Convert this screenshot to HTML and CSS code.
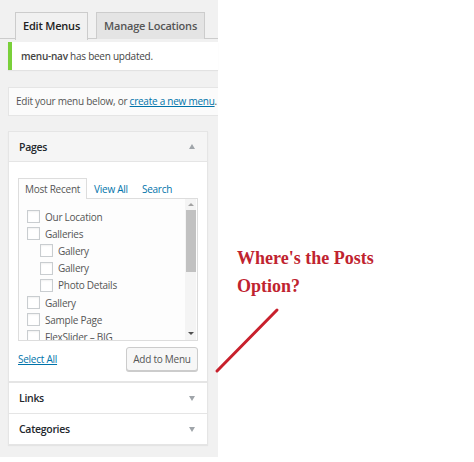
FILE: index.html
```html
<!DOCTYPE html>
<html lang="en">

<head>
    <meta charset="UTF-8">
    <meta name="viewport" content="width=device-width, initial-scale=1.0">
    <title>Menus</title>
    <link rel="stylesheet" href="styles.css">
</head>

<body>

    <div class="admin">

        <nav class="nav-tabs">
            <a class="nav-tab active">Edit Menus</a>
            <a class="nav-tab">Manage Locations</a>
        </nav>

        <div class="notice"><b>menu-nav</b> has been updated.</div>

        <div class="manage-menus">Edit your menu below, or <a href="#">create a new menu</a>.</div>

        <div class="accordion">
            <div class="section open">
                <h3 class="section-title">Pages <span class="arrow up"></span></h3>
                <div class="section-body">
                    <ul class="tabs">
                        <li class="tab active">Most Recent</li>
                        <li class="tab">View All</li>
                        <li class="tab">Search</li>
                    </ul>
                    <div class="tabs-panel">
                        <ul class="checklist">
                            <li><span class="box"></span>Our Location</li>
                            <li><span class="box"></span>Galleries</li>
                            <li class="child"><span class="box"></span>Gallery</li>
                            <li class="child"><span class="box"></span>Gallery</li>
                            <li class="child"><span class="box"></span>Photo Details</li>
                            <li><span class="box"></span>Gallery</li>
                            <li><span class="box"></span>Sample Page</li>
                            <li><span class="box"></span>FlexSlider – BIG</li>
                        </ul>
                        <div class="scrollbar">
                            <span class="scroll-up"></span>
                            <span class="thumb"></span>
                            <span class="scroll-down"></span>
                        </div>
                    </div>
                    <div class="button-controls">
                        <a href="#" class="select-all">Select All</a>
                        <button class="button">Add to Menu</button>
                    </div>
                </div>
            </div>
            <div class="section">
                <h3 class="section-title">Links <span class="arrow down"></span></h3>
            </div>
            <div class="section">
                <h3 class="section-title">Categories <span class="arrow down"></span></h3>
            </div>
        </div>

    </div>

    <!-- hand-drawn note on top of the screen -->
    <div class="note">Where's the Posts<br>Option?</div>
    <svg class="note-line" width="474" height="462" viewBox="0 0 474 462">
        <line x1="217" y1="371" x2="277" y2="310" stroke="#c8202c" stroke-width="3" stroke-linecap="round" />
    </svg>

</body>

</html>
```

FILE: styles.css
```css
* {
    padding: 0;
    margin: 0;
    box-sizing: border-box;
}

body {
    background-color: #ffffff;
    font-family: "Open Sans", "Noto Sans", sans-serif;
    font-size: 10px;
    letter-spacing: -0.25px;
    color: #444;
    position: relative;
    width: 474px;
    height: 462px;
    overflow: hidden;
}

.admin {
    width: 218px;
    height: 457px;
    background-color: #f1f1f1;
    padding-top: 12px;
}

.nav-tabs {
    display: flex;
    gap: 8px;
    padding-left: 15px;
    border-bottom: 1px solid #ccc;
    height: 27px;
}

.nav-tab {
    display: block;
    height: 27px;
    padding: 0 7px;
    line-height: 26px;
    white-space: nowrap;
    font-size: 11px;
    font-weight: 600;
    letter-spacing: -0.2px;
    color: #555;
    background-color: #e4e4e4;
    border: 1px solid #ccc;
    border-bottom: none;
}

.nav-tab.active {
    background-color: #f1f1f1;
    color: #222;
    height: 28px;
}

.notice {
    margin: 3px 0 0 8px;
    height: 28px;
    background-color: #fff;
    border-left: 4px solid #7ad03a;
    box-shadow: 0 1px 1px rgba(0, 0, 0, 0.06);
    padding-left: 9px;
    line-height: 28px;
    white-space: nowrap;
    color: #444;
}

.notice b {
    font-weight: 600;
}

.manage-menus {
    margin: 17px 0 0 8px;
    height: 29px;
    background-color: #fbfbfb;
    border: 1px solid #e5e5e5;
    border-right: none;
    padding-left: 7px;
    line-height: 27px;
    white-space: nowrap;
    color: #555;
}

.manage-menus a {
    color: #0073aa;
}

.accordion {
    margin: 15px 10px 0 8px;
    background-color: #fff;
    border: 1px solid #e5e5e5;
    box-shadow: 0 1px 1px rgba(0, 0, 0, 0.05);
}

.section + .section {
    border-top: 1px solid #e5e5e5;
}

.section-title {
    display: flex;
    justify-content: space-between;
    align-items: center;
    height: 30px;
    padding: 0 12px 0 10px;
    font-size: 10.5px;
    font-weight: 600;
    letter-spacing: -0.3px;
    color: #23282d;
}

.open .section-title {
    background-color: #f5f5f5;
    border-bottom: 1px solid #e5e5e5;
}

.arrow {
    width: 0;
    height: 0;
    border-left: 3px solid transparent;
    border-right: 3px solid transparent;
}

.arrow.up {
    border-bottom: 5px solid #a0a5aa;
}

.arrow.down {
    border-top: 5px solid #a0a5aa;
}

.section-body {
    padding: 16px 9px 10px 9px;
    border-bottom: 1px solid #e5e5e5;
}

.tabs {
    display: flex;
    list-style: none;
    height: 21px;
}

.tab {
    padding: 0 6px;
    line-height: 20px;
    white-space: nowrap;
    color: #0073aa;
    border: 1px solid transparent;
    border-bottom: none;
}

.tab.active {
    color: #555;
    border-color: #ddd;
    background-color: #fdfdfd;
    height: 21px;
    position: relative;
    z-index: 1;
}

.tabs-panel {
    display: flex;
    height: 143px;
    margin-top: -1px;
    border: 1px solid #ddd;
    background-color: #fdfdfd;
    overflow: hidden;
}

.checklist {
    flex: 1;
    list-style: none;
    padding: 9px 0 0 8px;
}

.checklist li {
    display: flex;
    align-items: center;
    height: 17.2px;
    white-space: nowrap;
    color: #555;
}

.checklist li.child {
    padding-left: 13px;
}

.box {
    flex-shrink: 0;
    width: 13px;
    height: 13px;
    margin-right: 5px;
    border: 1px solid #c9cdd0;
    background-color: #fff;
    box-shadow: inset 0 1px 2px rgba(0, 0, 0, 0.06);
}

.scrollbar {
    width: 11px;
    margin-right: 1px;
    display: flex;
    flex-direction: column;
    align-items: center;
    background-color: #f4f4f4;
}

.scroll-up,
.scroll-down {
    width: 0;
    height: 0;
    margin: 4px 0;
    border-left: 3px solid transparent;
    border-right: 3px solid transparent;
}

.scroll-up {
    border-bottom: 3px solid #a3a3a3;
}

.scroll-down {
    margin-top: auto;
    margin-bottom: 5px;
    border-top: 3px solid #505050;
}

.thumb {
    width: 10px;
    height: 62px;
    background-color: #c1c1c1;
}

.button-controls {
    display: flex;
    justify-content: space-between;
    align-items: center;
    padding-top: 6px;
}

.select-all {
    color: #0073aa;
}

.button {
    width: 72px;
    height: 24px;
    font-family: inherit;
    font-size: 10px;
    letter-spacing: -0.25px;
    color: #555;
    background-color: #f7f7f7;
    border: 1px solid #ccc;
    border-radius: 3px;
    box-shadow: 0 1px 0 #ccc;
}

.note {
    position: absolute;
    left: 237px;
    top: 245px;
    font-family: "Liberation Serif", "DejaVu Serif", serif;
    font-weight: bold;
    font-size: 18px;
    line-height: 27.5px;
    letter-spacing: 0;
    color: #c0232f;
}

.note-line {
    position: absolute;
    left: 0;
    top: 0;
}
```
